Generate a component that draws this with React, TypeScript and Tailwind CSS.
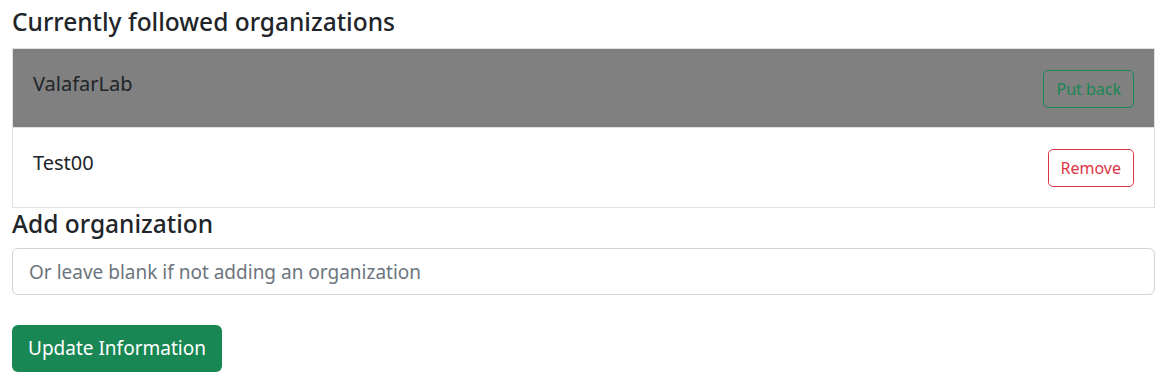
import React from 'react';

const orgs = [
  { name: 'ValafarLab', removed: true },
  { name: 'Test00', removed: false },
];

export default function App() {
  return (
    <div className="bg-white pl-3 pr-[10px] pt-[6px] text-[#212529]" style={{ fontFamily: '"Noto Sans", "Open Sans", sans-serif' }}>
      <h4 className="text-[24.5px] font-medium leading-[32px] mb-[10px]">Currently followed organizations</h4>

      {/* list of followed orgs */}
      <div className="flex flex-col">
        {orgs.map((org, i) => (
          <div
            key={org.name}
            className={`flex justify-between items-start h-20 px-5 pt-5 border border-[#dee2e6] ${
              i > 0 ? 'border-t-0' : ''
            } ${org.removed ? 'bg-[#808080]' : 'bg-white'}`}
          >
            <span className="text-[20px] leading-6 mt-[3px]">{org.name}</span>
            {org.removed ? (
              <button className="h-[38px] px-3 mt-[1px] rounded-[5px] border border-[#198754] text-[#198754] text-[16px]">
                Put back
              </button>
            ) : (
              <button className="h-[38px] px-3 mt-[1px] rounded-[5px] border border-[#dc3545] text-[#dc3545] text-[16px]">
                Remove
              </button>
            )}
          </div>
        ))}
      </div>

      <h4 className="text-[24.5px] font-medium leading-[32px] mb-[8px]">Add organization</h4>
      <input
        className="block w-full h-[47px] px-4 rounded-[6px] border border-[#ced4da] text-[19px] placeholder:text-[#6c757d] outline-none"
        placeholder="Or leave blank if not adding an organization"
      />

      <button className="mt-[30px] h-[47px] px-4 rounded-[6px] bg-[#198754] text-white text-[19px]">
        Update Information
      </button>
    </div>
  );
}
